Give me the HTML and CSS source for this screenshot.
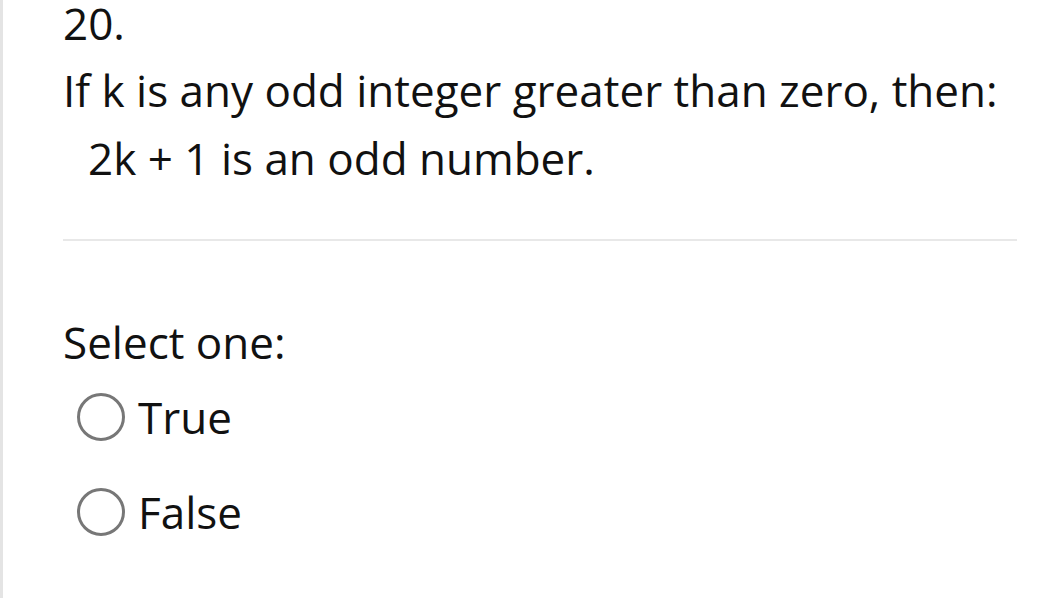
FILE: index.html
```html
<!DOCTYPE html>
<html>
<head>
<meta charset="utf-8">
<link rel="stylesheet" href="styles.css">
</head>
<body>
<div class="page">
  <div class="question">
    <div class="qno">20.</div>
    <div class="qtext">If k is any odd integer greater than zero, then:</div>
    <div class="stmt">2k + 1 is an odd number.</div>
  </div>
  <hr class="divider">
  <div class="answer">
    <div class="prompt">Select one:</div>
    <label class="option"><span class="radio"></span><span class="label">True</span></label>
    <label class="option"><span class="radio"></span><span class="label">False</span></label>
  </div>
</div>
</body>
</html>
```
FILE: styles.css
```css
html, body {
  margin: 0;
  padding: 0;
  background: #fff;
}
body {
  font-family: "Open Sans", Roboto, sans-serif;
  color: #111;
  width: 1039px;
  height: 598px;
  overflow: hidden;
}
.page {
  display: flow-root;
  height: 598px;
  border-left: 3px solid #e4e4e4;
  padding-left: 60px;
  padding-right: 22px;
  box-sizing: border-box;
}
.question {
  font-size: 44px;
  line-height: 68px;
}
.qno {
  line-height: 46px;
  margin-bottom: 10px;
}
.stmt {
  padding-left: 25px;
}
.divider {
  border: 0;
  height: 2px;
  background: #e8e8e8;
  margin: 47px 0 0 0;
}
.answer {
  font-size: 44px;
}
.prompt {
  line-height: 68px;
  margin-top: 67px;
}
.option {
  display: flex;
  align-items: center;
  gap: 13px;
  padding-left: 14px;
  height: 95px;
}
.option:first-of-type {
  margin-top: -7px;
}
.radio {
  width: 48px;
  height: 48px;
  border: 3px solid #777;
  border-radius: 50%;
  box-sizing: border-box;
}
.label {
  line-height: 68px;
}
```
